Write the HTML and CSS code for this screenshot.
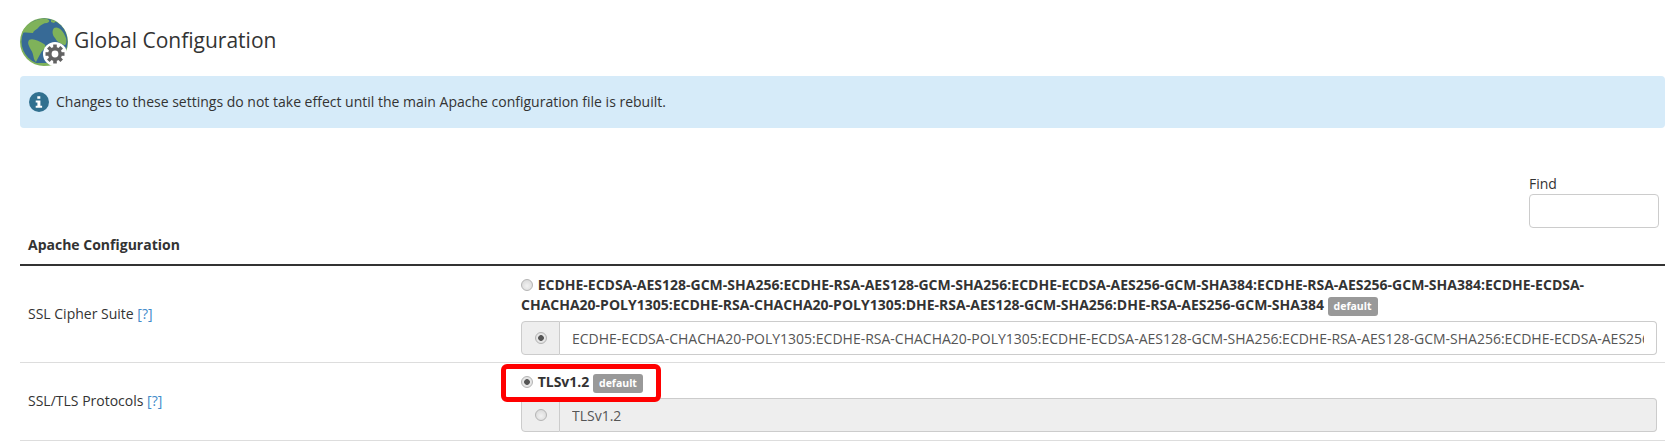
FILE: index.html
```html
<!DOCTYPE html>
<html lang="en">
<head>
<meta charset="utf-8">
<title>Global Configuration</title>
<link rel="stylesheet" href="styles.css">
</head>
<body>
<header class="page-head">
  <svg class="globe" viewBox="0 0 48 48" aria-hidden="true">
    <circle cx="24" cy="24" r="24" fill="#7fb25a"/>
    <circle cx="24.500" cy="23.500" r="23" fill="#376a96"/>
    <path d="M8 7 C13 3 20 0 27 1 C30 2 30 4 27 5 C24 5 20 7 18 10 C16 12 14 12 13 15 C9 15 6 14 2 15 C3 12 5 9 8 7Z" fill="#7fb25a"/>
    <path d="M31 2 L36 3 L34 5 L31 4Z" fill="#7fb25a"/>
    <path d="M9 22 C13 20 19 23 24 26 C27 28 25 31 22 33 C20 36 18 40 16 44 C13 42 14 36 11 32 C9 28 7 25 9 22Z" fill="#7fb25a"/>
    <path d="M34 10 C38 8 43 12 46 20 C47 24 46 28 44 27 C40 25 37 24 35 20 C32 17 32 12 34 10Z" fill="#7fb25a"/>
    <path d="M16 45 C22 48 28 48 33 47 L27 45Z" fill="#7fb25a"/>
    <circle cx="35" cy="36" r="12" fill="#fff"/>
    <g stroke="#626262" stroke-width="3.600">
      <path d="M35 26.500V45.500"/>
      <path d="M25.500 36H44.500"/>
      <path d="M28.300 29.300L41.700 42.700"/>
      <path d="M41.700 29.300L28.300 42.700"/>
    </g>
    <circle cx="35" cy="36" r="5.200" fill="#fff" stroke="#626262" stroke-width="3.600"/>
  </svg>
  <h1 class="page-title">Global Configuration</h1>
</header>

<div class="notice">
  <svg class="notice-icon" viewBox="0 0 20 20" aria-hidden="true">
    <circle cx="10" cy="10" r="10" fill="#31708f"/>
    <path d="M8.300 4.200h3v2.600h-3z M6.700 8.500h4.700v5.200h1.700v2.100H6.700v-2.100h1.700v-3.100H6.700z" fill="#fff"/>
  </svg>
  <span>Changes to these settings do not take effect until the main Apache configuration file is rebuilt.</span>
</div>

<div class="table-head">
  <div class="section-name">Apache Configuration</div>
  <label class="find">
    <span>Find</span>
    <input class="find-input" type="text">
  </label>
</div>

<div class="row row-cipher">
  <div class="row-label">SSL Cipher Suite <a class="help" href="#">[?]</a></div>
  <div class="row-body">
    <div class="option">
      <input class="radio" type="radio" name="cipher">
      <strong>ECDHE-ECDSA-AES128-GCM-SHA256:ECDHE-RSA-AES128-GCM-SHA256:ECDHE-ECDSA-AES256-GCM-SHA384:ECDHE-RSA-AES256-GCM-SHA384:ECDHE-ECDSA-CHACHA20-POLY1305:ECDHE-RSA-CHACHA20-POLY1305:DHE-RSA-AES128-GCM-SHA256:DHE-RSA-AES256-GCM-SHA384</strong>
      <span class="badge">default</span>
    </div>
    <div class="input-group">
      <span class="addon"><input class="radio" type="radio" name="cipher" checked></span>
      <input class="field" type="text" value="ECDHE-ECDSA-CHACHA20-POLY1305:ECDHE-RSA-CHACHA20-POLY1305:ECDHE-ECDSA-AES128-GCM-SHA256:ECDHE-RSA-AES128-GCM-SHA256:ECDHE-ECDSA-AES256-GCM-SHA384:ECDHE-RSA-AES256-GCM-SHA384">
    </div>
  </div>
</div>

<div class="row row-tls">
  <div class="row-label">SSL/TLS Protocols <a class="help" href="#">[?]</a></div>
  <div class="row-body">
    <div class="option option-tls">
      <input class="radio" type="radio" name="tls" checked>
      <strong>TLSv1.2</strong>
      <span class="badge">default</span>
      <span class="highlight"></span>
    </div>
    <div class="input-group">
      <span class="addon addon-disabled"><input class="radio" type="radio" name="tls"></span>
      <input class="field field-disabled" type="text" value="TLSv1.2" disabled>
    </div>
  </div>
</div>
</body>
</html>
```

FILE: styles.css
```css
* { box-sizing: border-box; }
html, body { margin: 0; height: 444px; overflow: hidden; }
body {
  padding: 0 11px 0 20px;
  background: #fff;
  color: #333;
  font-family: "Open Sans", sans-serif;
  font-size: 14px;
  line-height: 20px;
}
.page-head { display: flex; align-items: flex-start; gap: 6px; padding-top: 18px; height: 76px; }
.globe { width: 48px; height: 48px; flex: none; }
.page-title { margin: 8px 0 0; font-size: 21px; font-weight: 400; line-height: 28px; color: #333; }
.notice {
  display: flex; align-items: center; gap: 7px;
  height: 52px; padding: 0 9px;
  background: #d6ebf9; border-radius: 4px; color: #333;
}
.notice-icon { width: 20px; height: 20px; flex: none; }
.table-head {
  display: flex; justify-content: space-between; align-items: flex-end;
  height: 138px; padding: 0 6px 9px 8px;
  border-bottom: 2px solid #333;
}
.section-name { font-weight: 700; }
.find { display: flex; flex-direction: column; width: 130px; margin-bottom: 27px; }
.find-input { height: 34px; width: 130px; border: 1px solid #ccc; border-radius: 4px; background: #fff; }
.row { display: flex; border-bottom: 1px solid #ddd; }
.row-cipher { height: 97px; }
.row-tls { height: 78px; }
.row-label { width: 501px; padding-left: 8px; flex: none; align-self: center; }
.row-tls .row-label { padding-bottom: 2px; }
.help { color: #428bca; text-decoration: none; }
.row-body { flex: 1; min-width: 0; padding: 9px 8px 0 0; }
.option { margin-bottom: 5px; }
.option-tls { position: relative; height: 20px; margin-bottom: 6px; }
.radio {
  appearance: none; -webkit-appearance: none;
  width: 12px; height: 12px; margin: 0 1px 0 0; vertical-align: -1px;
  border: 1px solid #b4b4b4; border-radius: 50%;
  background: radial-gradient(circle at 50% 60%, #f2f2f2, #d4d4d4);
}
.radio:checked {
  background: radial-gradient(circle, #555 0, #555 2.500px, #e8e8e8 3.200px, #dcdcdc 100%);
}
.badge {
  display: inline-block; padding: 0 6px; height: 19px;
  background: #999; color: #fff; border-radius: 3px;
  font-size: 10.500px; font-weight: 700; line-height: 19px; vertical-align: 0;
}
.input-group { display: flex; height: 34px; }
.addon {
  display: flex; align-items: center; justify-content: center;
  width: 39px; flex: none; background: #eee;
  border: 1px solid #ccc; border-radius: 4px 0 0 4px;
}
.addon .radio { margin: 0; }
.field {
  flex: 1; min-width: 0; height: 34px; padding: 0 12px;
  border: 1px solid #ccc; border-left: 0; border-radius: 0 4px 4px 0;
  font: 14px "Open Sans", sans-serif; color: #555; background: #fff;
}
.field-disabled { background: #eee; }
.highlight {
  position: absolute; left: -20px; top: -8px; width: 160px; height: 38px;
  border: 5px solid #f00; border-radius: 6px; pointer-events: none;
}
```
